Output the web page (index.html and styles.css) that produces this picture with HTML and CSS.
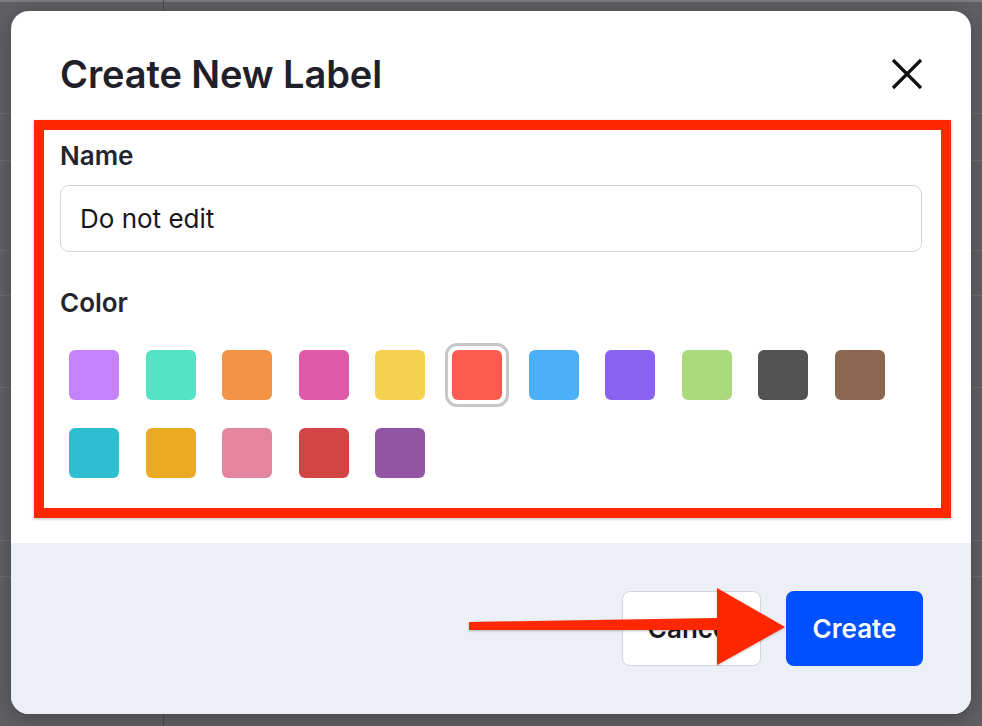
FILE: index.html
```html
<!DOCTYPE html>
<html lang="en">
<head>
<meta charset="utf-8">
<title>Create New Label</title>
<link rel="stylesheet" href="styles.css">
</head>
<body>
<div class="backdrop">
  <div class="modal">
    <div class="modal-body">
      <div class="modal-header">
        <h1 class="title">Create New Label</h1>
        <button class="close" aria-label="Close">
          <svg width="32" height="32" viewBox="0 0 32 32"><path d="M2 2 L30 30 M30 2 L2 30" stroke="#111" stroke-width="3.2" fill="none"/></svg>
        </button>
      </div>
      <label class="field-label">Name</label>
      <div class="input">Do not edit</div>
      <label class="field-label color-label">Color</label>
      <div class="swatches">
        <span class="swatch"><i style="background:#c583fb"></i></span>
        <span class="swatch"><i style="background:#54e3c4"></i></span>
        <span class="swatch"><i style="background:#f39346"></i></span>
        <span class="swatch"><i style="background:#e05aaa"></i></span>
        <span class="swatch"><i style="background:#f6d04f"></i></span>
        <span class="swatch selected"><i style="background:#fa5d4f"></i></span>
        <span class="swatch"><i style="background:#4cb0f9"></i></span>
        <span class="swatch"><i style="background:#8963f0"></i></span>
        <span class="swatch"><i style="background:#abda7b"></i></span>
        <span class="swatch"><i style="background:#535353"></i></span>
        <span class="swatch"><i style="background:#8b6650"></i></span>
        <span class="swatch"><i style="background:#2fbecf"></i></span>
        <span class="swatch"><i style="background:#eaaa24"></i></span>
        <span class="swatch"><i style="background:#e4849f"></i></span>
        <span class="swatch"><i style="background:#d34545"></i></span>
        <span class="swatch"><i style="background:#9255a3"></i></span>
      </div>
      <div class="highlight"></div>
    </div>
    <div class="modal-footer">
      <button class="btn btn-cancel">Cancel</button>
      <button class="btn btn-create">Create</button>
      <svg class="arrow" width="330" height="80" viewBox="0 0 330 80">
        <polygon points="2,34 250,30 250,0 318,39 250,77 250,42 2,42" fill="#fe2700"/>
      </svg>
    </div>
  </div>
</div>
</body>
</html>
```

FILE: styles.css
```css
* { box-sizing: border-box; }
html, body { margin: 0; padding: 0; }
body {
  width: 982px;
  height: 726px;
  overflow: hidden;
  font-family: Inter, "Noto Sans", "Liberation Sans", sans-serif;
  background:
    linear-gradient(#6c6c71, #6c6c71) 0 113px / 100% 1px no-repeat,
    linear-gradient(#6c6c71, #6c6c71) 0 160px / 100% 1px no-repeat,
    linear-gradient(#6c6c71, #6c6c71) 0 250px / 100% 1px no-repeat,
    linear-gradient(#6c6c71, #6c6c71) 0 295px / 100% 1px no-repeat,
    linear-gradient(#6c6c71, #6c6c71) 0 387px / 100% 1px no-repeat,
    linear-gradient(#6c6c71, #6c6c71) 0 540px / 100% 1px no-repeat,
    linear-gradient(#6c6c71, #6c6c71) 0 576px / 100% 1px no-repeat,
    linear-gradient(#4a4a4f, #4a4a4f) 163px 0 / 1px 100% no-repeat,
    linear-gradient(#7a7a80, #7a7a80) 0 0 / 100% 2px no-repeat,
    #5f5f64;
}
.backdrop {
  padding: 11px;
}
.modal {
  width: 960px;
  height: 703px;
  background: #fff;
  border-radius: 18px;
  overflow: hidden;
  display: flex;
  flex-direction: column;
  box-shadow: 0 4px 20px rgba(0,0,0,0.25);
}
.modal-body {
  position: relative;
  padding: 0 49px 0 49px;
  height: 532px;
}
.modal-header {
  display: flex;
  justify-content: space-between;
  align-items: center;
  height: 128px;
}
.title {
  margin: 0;
  font-size: 38px;
  font-weight: 600;
  color: #1f2029;
  letter-spacing: -0.1px;
  margin-top: -2px;
}
.close {
  border: 0;
  background: none;
  padding: 0;
  width: 32px;
  height: 32px;
  margin-right: -1px;
  margin-top: -2px;
  display: flex;
}
.field-label {
  display: block;
  font-size: 26px;
  font-weight: 600;
  color: #23252e;
  line-height: 30px;
  margin-top: 2px;
}
.input {
  margin-top: 14px;
  height: 67px;
  border: 1.5px solid #d2d3d9;
  border-radius: 9px;
  padding: 0 19px;
  display: flex;
  align-items: center;
  font-size: 26px;
  color: #16171d;
}
.color-label {
  margin-top: 36px;
}
.swatches {
  display: flex;
  flex-wrap: wrap;
  column-gap: 12.6px;
  row-gap: 14px;
  margin-top: 25px;
  margin-left: 2px;
  width: 850px;
}
.swatch {
  width: 64px;
  height: 64px;
  border: 3px solid transparent;
  border-radius: 12px;
  padding: 4px;
  display: block;
}
.swatch i {
  display: block;
  width: 50px;
  height: 50px;
  border-radius: 6px;
}
.swatch.selected {
  border-color: #c7c7c9;
}
.highlight {
  position: absolute;
  left: 23px;
  top: 109px;
  width: 917px;
  height: 398px;
  border: 10px solid #fe2700;
  box-shadow: 0 1px 3px rgba(0,0,0,0.25);
  pointer-events: none;
}
.modal-footer {
  flex: 1;
  background: #eceff6;
  display: flex;
  justify-content: flex-end;
  align-items: flex-start;
  gap: 25px;
  padding: 48px 48px 0 0;
  position: relative;
}
.btn {
  height: 75px;
  border-radius: 8px;
  font-family: inherit;
  font-size: 26px;
  font-weight: 600;
  padding: 0;
}
.btn-cancel {
  width: 139px;
  background: #fff;
  border: 1.5px solid #d2d4dc;
  color: #1a1b22;
}
.btn-create {
  width: 137px;
  background: #0050ff;
  border: 0;
  color: #fff;
}
.arrow {
  position: absolute;
  left: 456px;
  top: 45px;
  filter: drop-shadow(0 1px 1px rgba(0,0,0,0.25));
}
```
